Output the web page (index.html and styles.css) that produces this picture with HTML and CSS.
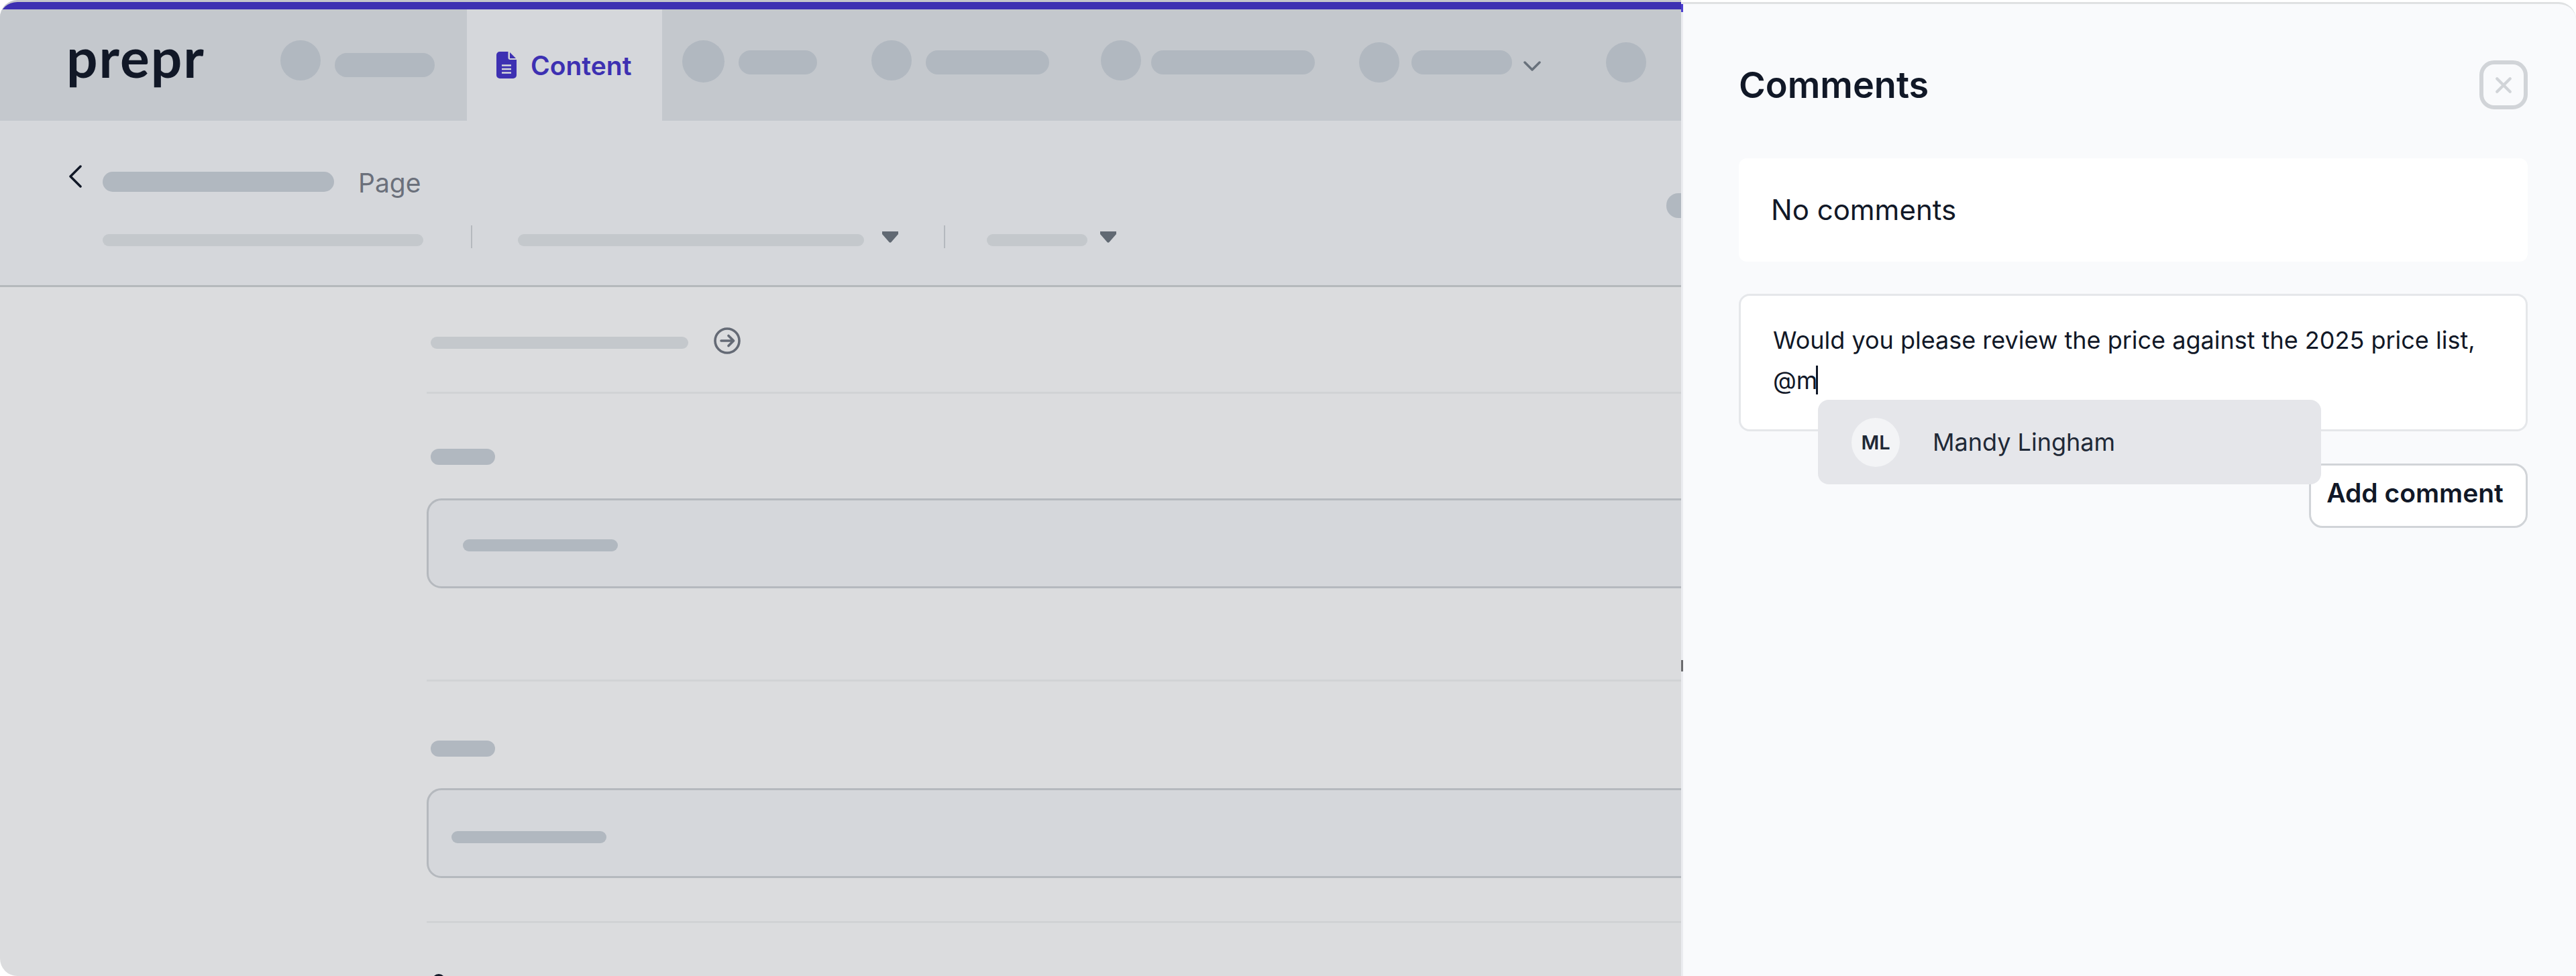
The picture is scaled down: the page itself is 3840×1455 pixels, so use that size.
FILE: index.html
```html
<!DOCTYPE html>
<html lang="en">
<head>
    <meta charset="utf-8">
    <title>Prepr - Comments</title>
    <link rel="stylesheet" href="styles.css">
</head>
<body>
    <div class="app">
        <main class="page">
            <nav class="navbar">
                <div class="logo">prepr</div>
                <div class="nav-item nav-first"><span class="dot"></span><span class="pill w149"></span></div>
                <div class="tab">
                    <svg class="doc-icon" viewBox="0 0 30 40"><path fill="#3d30b2" d="M5 0h12.500v9a3 3 0 0 0 3 3H30v23a5 5 0 0 1-5 5H5a5 5 0 0 1-5-5V5a5 5 0 0 1 5-5z"/><path fill="#3d30b2" d="M20 1l9 9h-9z"/><path stroke="#d5d7db" stroke-width="2.400" d="M8 20.500h14M8 26h14M8 31.500h14"/></svg>
                    <span>Content</span>
                </div>
                <div class="nav-item nav-2"><span class="dot dot-lg"></span><span class="pill w117"></span></div>
                <div class="nav-item nav-3"><span class="dot"></span><span class="pill w184"></span></div>
                <div class="nav-item nav-4"><span class="dot"></span><span class="pill w244"></span></div>
                <div class="nav-item nav-5"><span class="dot"></span><span class="pill w150"></span>
                    <svg class="chevron" viewBox="0 0 26 16"><path fill="none" stroke="#68717b" stroke-width="3.500" stroke-linecap="round" stroke-linejoin="round" d="M2 2l11 11L24 2"/></svg>
                </div>
                <div class="nav-item nav-6"><span class="dot"></span></div>
            </nav>

            <header class="header">
                <div class="title-row">
                    <svg class="back" viewBox="0 0 20 34"><path fill="none" stroke="#111827" stroke-width="3.500" stroke-linecap="round" stroke-linejoin="round" d="M17 2L2 17l15 15"/></svg>
                    <span class="bar title-bar"></span>
                    <span class="page-type">Page</span>
                    <span class="action"></span>
                </div>
                <div class="meta-row">
                    <span class="bar light w478"></span>
                    <span class="divider"></span>
                    <span class="bar light w516"></span>
                    <svg class="caret-down" viewBox="0 0 26 17"><path fill="#616973" d="M1 0h24v4L14.500 16q-1.500 1.500-3 0L1 4z"/></svg>
                    <span class="divider second"></span>
                    <span class="bar light w150"></span>
                    <svg class="caret-down near" viewBox="0 0 26 17"><path fill="#616973" d="M1 0h24v4L14.500 16q-1.500 1.500-3 0L1 4z"/></svg>
                </div>
            </header>

            <div class="form">
                <div class="link-row">
                    <span class="bar light w384"></span>
                    <svg class="arrow" viewBox="0 0 40 40"><g fill="none" stroke="#646a75" stroke-width="3.600" stroke-linecap="round" stroke-linejoin="round"><circle cx="20" cy="20" r="18"/><path d="M11 20h18M22 12.500l7.500 7.500-7.500 7.500"/></g></svg>
                </div>
                <section class="field">
                    <span class="label"></span>
                    <div class="input"><span class="bar value"></span></div>
                </section>
                <section class="field field-second">
                    <span class="label"></span>
                    <div class="input tight"><span class="bar value"></span></div>
                </section>
                <div class="next-field"></div>
            </div>
        </main>

        <aside class="panel">
            <div class="panel-head">
                <h1>Comments</h1>
                <button class="close" aria-label="Close"><svg viewBox="0 0 24 24"><path fill="none" stroke="#d1d4d8" stroke-width="4" stroke-linecap="round" d="M3 3l18 18M21 3L3 21"/></svg></button>
            </div>
            <div class="empty">No comments</div>
            <div class="editor">
                Would you please review the price against the 2025 price list,<br>@m<span class="cursor"></span>
                <div class="mention">
                    <span class="avatar">ML</span>
                    <span class="name">Mandy Lingham</span>
                </div>
            </div>
            <button class="add">Add comment</button>
            <span class="edge-accent"></span>
            <span class="edge-text"></span>
        </aside>
    </div>
</body>
</html>
```

FILE: styles.css
```css
* {
    box-sizing: border-box;
}
body {
    margin: 0;
    background: #fff;
    font-family: Inter, "Liberation Sans", sans-serif;
    color: #111827;
}
.app {
    display: flex;
    width: 3840px;
    height: 1455px;
    overflow: hidden;
}
svg {
    display: block;
    flex: none;
}

/* dimmed page */
.page {
    width: 2506px;
    height: 1455px;
    overflow: hidden;
    background: #dbdcde;
    border-top: 3px solid #c4c6cb;
    border-radius: 26px 0 0 26px;
}
.navbar {
    display: flex;
    height: 177px;
    border-top: 11px solid #3d30b2;
    background: #c4c8cd;
}
.logo {
    width: 316px;
    padding-left: 99px;
    font: 700 82px/100px Lato, sans-serif;
    letter-spacing: 2px;
    margin-top: 20px;
}
.nav-item {
    display: flex;
    align-items: flex-start;
    flex: none;
    padding-top: 46px;
}
.nav-first {
    margin-left: 102px;
    width: 278px;
}
.dot {
    width: 60px;
    height: 60px;
    border-radius: 50%;
    background: #b1b8c0;
}
.dot-lg {
    width: 63px;
    height: 63px;
}
.pill {
    height: 36px;
    margin: 15px 0 0 21px;
    border-radius: 18px;
    background: #b1b8c0;
}
.nav-first .pill {
    margin-top: 19px;
}
.tab {
    display: flex;
    flex: none;
    width: 291px;
    padding: 63px 0 0 44px;
    background: #d5d7db;
    color: #3d30b2;
    font-size: 39px;
    font-weight: 600;
    line-height: 42px;
}
.doc-icon {
    width: 30px;
    height: 40px;
    margin-right: 21px;
}
.nav-2 { margin-left: 30px; width: 282px; }
.nav-3 { width: 342px; }
.nav-4 { width: 385px; }
.nav-4 .pill { margin-left: 15px; }
.nav-5 { width: 368px; padding-top: 49px; }
.nav-5 .pill { margin: 12px 0 0 18px; }
.nav-6 { padding-top: 49px; }
.chevron {
    width: 26px;
    height: 16px;
    margin: 28px 0 0 17px;
}
.w117 { width: 117px; }
.w149 { width: 149px; }
.w150 { width: 150px; }
.w184 { width: 184px; }
.w244 { width: 244px; }
.w384 { width: 384px; }
.w478 { width: 478px; }
.w516 { width: 516px; }

.header {
    height: 248px;
    padding: 66px 0 0 103px;
    background: #d5d7db;
    border-bottom: 3px solid #b5b9bc;
}
.title-row {
    display: flex;
    height: 90px;
}
.back {
    width: 20px;
    height: 34px;
}
.bar {
    flex: none;
    height: 18px;
    border-radius: 9px;
    background: #b1b8c0;
}
.bar.light {
    background: #c4c8cc;
}
.title-bar {
    width: 345px;
    height: 30px;
    margin: 10px 0 0 30px;
    border-radius: 15px;
}
.page-type {
    margin: 5px 0 0 36px;
    color: #6b707b;
    font-size: 39px;
    line-height: 44px;
}
.action {
    width: 22px;
    height: 37px;
    margin: 42px 0 0 auto;
    background: #b1b8c0;
    border-radius: 18px 0 0 18px;
}
.meta-row {
    display: flex;
    align-items: center;
    height: 34px;
    padding-left: 50px;
}
.meta-row .bar {
    margin-top: 9px;
}
.divider {
    width: 2px;
    height: 34px;
    margin: 0 68px 0 71px;
    background: #b5b9be;
}
.divider.second {
    margin: 0 62px 0 67px;
}
.caret-down {
    width: 26px;
    height: 17px;
    margin-left: 26px;
}
.caret-down.near {
    margin-left: 18px;
}

.form {
    margin-left: 636px;
}
.link-row {
    display: flex;
    height: 159px;
    padding: 60px 0 0 6px;
    border-bottom: 3px solid #d1d3d5;
}
.link-row .bar {
    margin-top: 14px;
}
.arrow {
    width: 40px;
    height: 40px;
    margin-left: 38px;
}
.field {
    height: 429px;
    padding-top: 82px;
    border-bottom: 3px solid #d1d3d5;
}
.field-second {
    height: 360px;
    padding-top: 88px;
}
.label {
    display: block;
    width: 96px;
    height: 24px;
    margin-left: 6px;
    border-radius: 12px;
    background: #b1b8c0;
}
.input {
    display: flex;
    align-items: center;
    height: 134px;
    margin: 50px -30px 0 0;
    padding-left: 51px;
    border: 3px solid #b5b9be;
    border-radius: 22px;
    background: #d5d7db;
}
.field-second .input {
    margin-top: 47px;
}
.input.tight {
    padding-left: 34px;
}
.input .value {
    width: 231px;
    margin-top: 6px;
}
.input.tight .value {
    margin-top: 11px;
}
.next-field {
    width: 20px;
    height: 20px;
    margin: 76px 0 0 8px;
    border-radius: 10px;
    background: #111827;
}

/* comments panel */
.panel {
    position: relative;
    width: 1334px;
    margin-top: 3px;
    padding: 83px 72px 0 83px;
    background: #f9fafc;
    border-top: 3px solid #dfe1e2;
    border-left: 3px solid #ebecf0;
    border-radius: 0 26px 0 0;
}
.panel-head {
    display: flex;
    justify-content: space-between;
    align-items: center;
    height: 75px;
    margin-bottom: 72px;
}
h1 {
    margin: 0;
    font-size: 54px;
    font-weight: 600;
    line-height: 74px;
}
.close {
    display: flex;
    align-items: center;
    justify-content: center;
    width: 72px;
    height: 73px;
    padding: 0;
    background: #f9fafc;
    border: 6px solid #d1d4d8;
    border-radius: 22px;
}
.close svg {
    width: 26px;
    height: 26px;
}
.empty {
    height: 154px;
    padding-left: 48px;
    background: #fff;
    border-radius: 12px;
    font-size: 42px;
    line-height: 154px;
}
.editor {
    position: relative;
    height: 205px;
    margin-top: 48px;
    padding: 36px 0 0 48px;
    background: #fff;
    border: 3px solid #e5e7ea;
    border-radius: 16px;
    font-size: 36px;
    line-height: 60px;
    white-space: nowrap;
}
.cursor {
    display: inline-block;
    width: 3px;
    height: 43px;
    margin-left: -2px;
    vertical-align: -8px;
    background: #111827;
}
.mention {
    position: absolute;
    z-index: 1;
    top: 155px;
    left: 115px;
    display: flex;
    align-items: center;
    width: 750px;
    height: 126px;
    padding-left: 50px;
    background: #e5e6ea;
    border-radius: 16px;
    color: #1f2937;
}
.avatar {
    width: 72px;
    height: 73px;
    border-radius: 50%;
    background: #f3f4f6;
    font-size: 29px;
    font-weight: 600;
    line-height: 73px;
    text-align: center;
}
.name {
    margin-left: 49px;
}
.add {
    display: block;
    width: 326px;
    height: 96px;
    margin: 48px 0 0 auto;
    padding: 0 10px 9px 0;
    background: #fff;
    border: 3px solid #d1d4d8;
    border-radius: 20px;
    color: #111827;
    font: 600 39px Inter, sans-serif;
}
.edge-accent,
.edge-text {
    position: absolute;
    left: -3px;
    top: 0;
    width: 3px;
    height: 12px;
    background: #4d3fd0;
}
.edge-text {
    top: 978px;
    height: 17px;
    background: #6b6b6e;
}
```
